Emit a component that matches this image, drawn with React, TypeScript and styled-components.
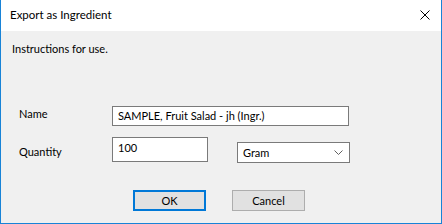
import React from "react";
import styled, { createGlobalStyle } from "styled-components";

const Global = createGlobalStyle`
  html, body { margin: 0; padding: 0; }
  body { width: 442px; height: 224px; overflow: hidden; background: #f0f0f0; }
  * { box-sizing: border-box; }
`;

const Win = styled.div`
  width: 442px;
  height: 224px;
  display: flex;
  flex-direction: column;
  border: 1px solid #1883d7;
  border-top: none;
  font-family: Lato, "Noto Sans", sans-serif;
  font-size: 11px;
  color: #000;
  background: #f0f0f0;
  -webkit-font-smoothing: none;
`;

const TitleBar = styled.div`
  height: 31px;
  flex: none;
  background: #fff;
  display: flex;
  align-items: center;
  justify-content: space-between;
  padding: 0 10px 2px 9px;
`;

const Title = styled.span`
  font-size: 11.5px;
  line-height: 16px;
`;

const CloseIcon = styled.svg`
  width: 10px;
  height: 10px;
  margin-right: 1px;
`;

const Body = styled.div`
  flex: 1;
  display: flex;
  flex-direction: column;
  padding: 10px 0 0 11px;
`;

const Instructions = styled.div`
  line-height: 16px;
`;

const Row = styled.div<{ $top: number }>`
  display: flex;
  align-items: flex-start;
  margin-top: ${(p) => p.$top}px;
  padding-left: 7px;
`;

const Label = styled.label<{ $offset: number }>`
  width: 93px;
  line-height: 16px;
  margin-top: ${(p) => p.$offset}px;
`;

const TextBox = styled.div<{ $w: number; $h: number }>`
  width: ${(p) => p.$w}px;
  height: ${(p) => p.$h}px;
  border: 1px solid #7a7a7a;
  background: #fff;
  padding: ${(p) => (p.$h > 22 ? "2px" : "1px")} 5px 0;
  line-height: 16px;
  white-space: nowrap;
`;

const Select = styled.div`
  width: 113px;
  height: 21px;
  margin-left: 29px;
  margin-top: 5px;
  border: 1px solid #7a7a7a;
  background: #fff;
  display: flex;
  align-items: center;
  justify-content: space-between;
  padding: 0 6px 0 5px;
  line-height: 16px;
`;

const Buttons = styled.div`
  display: flex;
  margin-top: 27px;
  padding-left: 121px;
  gap: 26px;
`;

const Button = styled.button<{ $primary?: boolean }>`
  width: 73px;
  height: 21px;
  padding: 0;
  background: #e1e1e1;
  border: ${(p) => (p.$primary ? "2px solid #0078d7" : "1px solid #adadad")};
  font-family: inherit;
  font-size: 11px;
  color: #000;
  line-height: 16px;
`;

export default function App() {
  return (
    <>
      <Global />
      <Win>
        <TitleBar>
          <Title>Export as Ingredient</Title>
          <CloseIcon viewBox="0 0 10 10">
            <path d="M0.5 0.5 L9.5 9.5 M9.5 0.5 L0.5 9.5" stroke="#000" strokeWidth="1" fill="none" />
          </CloseIcon>
        </TitleBar>
        <Body>
          <Instructions>Instructions for use.</Instructions>
          <Row $top={49}>
            <Label $offset={0}>Name</Label>
            <TextBox $w={237} $h={20}>SAMPLE, Fruit Salad - jh (Ingr.)</TextBox>
          </Row>
          <Row $top={11}>
            <Label $offset={7}>Quantity</Label>
            <TextBox $w={96} $h={25}>100</TextBox>
            <Select>
              <span>Gram</span>
              <svg width="9" height="5" viewBox="0 0 9 5">
                <path d="M0.5 0.5 L4.5 4.5 L8.5 0.5" stroke="#606060" strokeWidth="1" fill="none" />
              </svg>
            </Select>
          </Row>
          <Buttons>
            <Button $primary>OK</Button>
            <Button>Cancel</Button>
          </Buttons>
        </Body>
      </Win>
    </>
  );
}
